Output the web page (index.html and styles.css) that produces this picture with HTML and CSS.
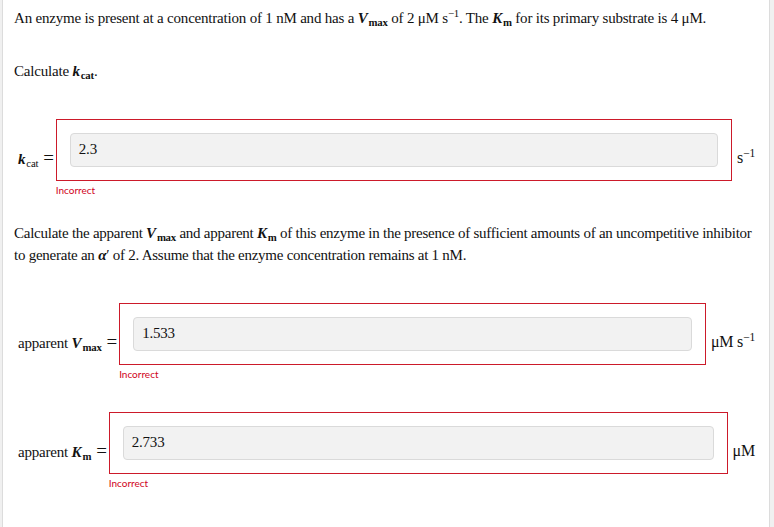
FILE: index.html
```html
<!DOCTYPE html>
<html lang="en">
<head>
    <meta charset="UTF-8">
    <title>Enzyme kinetics</title>
    <link rel="stylesheet" href="styles.css">
</head>
<body>
    <div class="page">
        <p class="prompt">
            An enzyme is present at a concentration of 1&nbsp;nM and has a <i class="var">V</i><sub>max</sub> of 2&nbsp;μM&nbsp;s<sup>−1</sup>. The <i class="var">K</i><sub>m</sub> for its primary substrate is 4&nbsp;μM.
        </p>

        <p class="prompt part">Calculate <i class="var">k</i><sub>cat</sub>.</p>

        <div class="answer-row first">
            <span class="label"><i class="var">k</i><sub class="plain">cat</sub><span class="eq">=</span></span>
            <div class="answer">
                <div class="answer-box">
                    <div class="field">2.3</div>
                </div>
                <div class="feedback">Incorrect</div>
            </div>
            <span class="unit">s<sup>−1</sup></span>
        </div>

        <p class="prompt part-two">
            Calculate the apparent <i class="var">V</i><sub>max</sub> and apparent <i class="var">K</i><sub>m</sub> of this enzyme in the presence of sufficient amounts of an uncompetitive inhibitor to generate an <i class="var">α</i>′ of 2. Assume that the enzyme concentration remains at 1&nbsp;nM.
        </p>

        <div class="answer-row second">
            <span class="label">apparent <i class="var">V</i><sub>max</sub><span class="eq">=</span></span>
            <div class="answer">
                <div class="answer-box">
                    <div class="field">1.533</div>
                </div>
                <div class="feedback">Incorrect</div>
            </div>
            <span class="unit">μM s<sup>−1</sup></span>
        </div>

        <div class="answer-row third">
            <span class="label">apparent <i class="var">K</i><sub>m</sub><span class="eq">=</span></span>
            <div class="answer">
                <div class="answer-box">
                    <div class="field">2.733</div>
                </div>
                <div class="feedback">Incorrect</div>
            </div>
            <span class="unit">μM</span>
        </div>
    </div>
</body>
</html>
```

FILE: styles.css
```css
* {
    margin: 0;
    padding: 0;
    box-sizing: border-box;
}

body {
    background: #f0f0f0;
    font-family: "Liberation Serif", "Times New Roman", serif;
    color: #111;
    font-size: 15px;
    letter-spacing: -0.2px;
}

.page {
    width: 768px;
    min-height: 527px;
    margin-left: 2px;
    background: #fff;
    border-left: 1px solid #dcdcdc;
    border-right: 1px solid #dcdcdc;
    padding: 7px 14px 0 11px;
}

.prompt {
    line-height: 22px;
}

.part {
    margin-top: 31px;
}

.part-two {
    margin-top: 26px;
    margin-right: -8px;
    letter-spacing: -0.25px;
}

.var {
    font-weight: bold;
    font-style: italic;
}

sub {
    font-size: 0.72em;
    font-weight: bold;
    vertical-align: -0.3em;
    line-height: 0;
    margin-left: 1px;
}

sub.plain {
    font-weight: normal;
}

sup {
    font-size: 0.72em;
    vertical-align: 0.55em;
    line-height: 0;
}

.answer-row {
    display: flex;
    align-items: center;
    padding-left: 4px;
}

.answer-row.first {
    margin-top: 37px;
}

.answer-row.second {
    margin-top: 37px;
}

.answer-row.third {
    margin-top: 32px;
}

.label {
    white-space: nowrap;
    margin-right: 2px;
}

.eq {
    font-size: 19px;
    margin-left: 5px;
}

.answer {
    flex: 1;
}

.answer-box {
    border: 1px solid #cc1a2a;
    padding: 13px 13px;
}

.field {
    height: 34px;
    background: #f2f2f2;
    border: 1px solid #dadada;
    border-radius: 4px;
    padding: 5px 8px;
    line-height: 20px;
}

.feedback {
    font-family: Lato, "Open Sans", sans-serif;
    font-size: 10px;
    letter-spacing: 0;
    color: #d0021b;
    margin-top: 3px;
    line-height: 12px;
}

.unit {
    white-space: nowrap;
    margin-left: 5px;
    font-size: 16px;
}
```
